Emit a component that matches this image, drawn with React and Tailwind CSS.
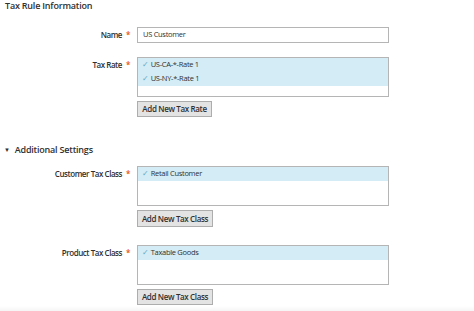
import React from 'react'

function Label({ children }) {
  return (
    <div className="flex w-[137px] shrink-0 items-start">
      <span className="w-[122px] text-right text-[8px] font-semibold leading-[16px] tracking-[-0.45px] text-[#303030]">
        {children}
      </span>
      <span className="w-[15px] pl-[4px] text-[8px] font-semibold leading-[16px] text-[#eb5202]">*</span>
    </div>
  )
}

function MultiSelect({ items }) {
  return (
    <div className="h-[40px] w-[252px] border border-[#b5b5b5] bg-white">
      {items.map((item) => (
        <div key={item} className="flex h-[14px] items-center bg-[#d4ecf5] pl-[4px] text-[7.5px] tracking-[-0.3px] text-[#303030]">
          <span className="mr-[2px] text-[#6aa9c7]">✓</span>
          {item}
        </div>
      ))}
    </div>
  )
}

function AddButton({ children, width, height }) {
  return (
    <button className={`mt-[4px] block ${height} ${width} border border-[#adadad] bg-[#e3e3e3] text-[8px] font-semibold tracking-[-0.35px] text-[#303030]`}>
      {children}
    </button>
  )
}

export default function App() {
  return (
    <div className="h-[311px] w-[474px] overflow-hidden bg-white font-['Open_Sans',sans-serif] text-[#303030]">
      <h2 className="pl-[5px] text-[9px] font-semibold leading-[12px] tracking-[-0.2px]">Tax Rule Information</h2>

      <div className="mt-[15px] flex">
        <Label>Name</Label>
        <div className="flex h-[16px] w-[252px] items-center border border-[#b5b5b5] pl-[5px] text-[7.5px] tracking-[-0.3px]">US Customer</div>
      </div>

      <div className="mt-[14px] flex">
        <Label>Tax Rate</Label>
        <div className="flex flex-col">
          <MultiSelect items={['US-CA-*-Rate 1', 'US-NY-*-Rate 1']} />
          <AddButton width="w-[75px]" height="h-[16px]">Add New Tax Rate</AddButton>
        </div>
      </div>

      <div className="mt-[27px] flex items-center pl-[4px] text-[9px] font-semibold leading-[12px] tracking-[-0.2px]">
        <span className="mr-[5px] text-[6px]">▼</span>
        Additional Settings
      </div>

      <div className="mt-[10px] flex">
        <Label>Customer Tax Class</Label>
        <div className="flex flex-col">
          <MultiSelect items={['Retail Customer']} />
          <AddButton width="w-[76px]" height="h-[17px]">Add New Tax Class</AddButton>
        </div>
      </div>

      <div className="mt-[18px] flex">
        <Label>Product Tax Class</Label>
        <div className="flex flex-col">
          <MultiSelect items={['Taxable Goods']} />
          <AddButton width="w-[76px]" height="h-[16px]">Add New Tax Class</AddButton>
        </div>
      </div>

      <div className="mt-[1px] h-[6px] bg-gradient-to-b from-white to-[#f3f3f3]" />
    </div>
  )
}
